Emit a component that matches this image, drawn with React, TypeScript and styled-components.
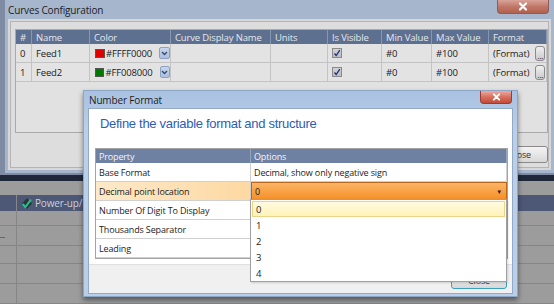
import React from 'react';
import styled, { createGlobalStyle } from 'styled-components';

const GlobalStyle = createGlobalStyle`
  html, body {
    margin: 0;
    padding: 0;
  }
  body {
    width: 554px;
    height: 304px;
    overflow: hidden;
    font-family: "Open Sans", "Liberation Sans", sans-serif;
    font-size: 9px;
    letter-spacing: -0.15px;
    color: #1c1c1c;
  }
`;

const Desktop = styled.div`
  position: relative;
  width: 554px;
  height: 304px;
  overflow: hidden;
  background: #9c9c9c;
`;

/* ---------- application behind the windows ---------- */

const BackApp = styled.div`
  display: flex;
  flex-direction: column;
  height: 100%;
`;

const BehindTop = styled.div`
  height: 177px;
  background: #7e8ba2;
`;

const DarkBand = styled.div`
  height: 6px;
  background: #1f2839;
`;

const BandGap = styled.div`
  height: 15px;
  background: #9c9c9c;
`;

const GridHead = styled.div`
  display: flex;
  height: 16px;
  background: #4c5876;
  color: #c9d0dc;
  font-size: 10px;
`;

const GridRow = styled.div<{ $h: number }>`
  display: flex;
  height: ${(p) => p.$h}px;
  border-bottom: 1px solid #868686;
`;

const GridCell = styled.div<{ $w?: number }>`
  display: flex;
  align-items: center;
  gap: 2px;
  width: ${(p) => (p.$w ? `${p.$w}px` : 'auto')};
  flex: ${(p) => (p.$w ? 'none' : 1)};
  border-right: ${(p) => (p.$w ? '1px solid #868686' : 'none')};
  padding-left: ${(p) => (p.$w ? 0 : 4)}px;
  box-sizing: border-box;
`;

const LinkDash = styled.span`
  display: block;
  width: 5px;
  height: 1px;
  margin-top: 4px;
  background: #5a5ad0;
`;

/* ---------- window chrome ---------- */

const BackWindow = styled.div`
  position: absolute;
  left: 5px;
  top: 0;
  width: 549px;
  height: 173px;
  background: #a6b6cd;
  display: flex;
  flex-direction: column;
  padding: 0 3px 3px;
  box-sizing: border-box;
`;

const TitleBar = styled.div<{ $h: number }>`
  position: relative;
  flex: none;
  height: ${(p) => p.$h}px;
  display: flex;
  align-items: center;
  padding-left: ${(p) => (p.$h > 18 ? 0 : 1)}px;
  font-size: 10px;
  color: #1d1d1d;
`;

const CloseX = styled.div<{ $w: number; $h: number; $dim?: boolean }>`
  position: absolute;
  top: 0;
  right: ${(p) => (p.$dim ? 2 : 1)}px;
  width: ${(p) => p.$w}px;
  height: ${(p) => p.$h}px;
  border: 1px solid ${(p) => (p.$dim ? '#8d5e57' : '#9a3d30')};
  border-top: none;
  border-radius: 0 0 4px 4px;
  box-sizing: border-box;
  background: ${(p) =>
    p.$dim
      ? 'linear-gradient(#d9a39a, #c07868 50%, #b2604f)'
      : 'linear-gradient(#eeaa9e, #d6705f 50%, #c44a36)'};
  display: flex;
  align-items: center;
  justify-content: center;
`;

const BackContent = styled.div`
  flex: 1;
  background: #d7d7d7;
  padding: 2px;
  display: flex;
`;

const Panel = styled.div`
  flex: 1;
  border: 1px solid #b4b4b4;
  background: #dddddd;
  display: flex;
  flex-direction: column;
  padding: 7px 0 0 4px;
`;

const TableBox = styled.div`
  height: 104px;
  border: 1px solid #a9a9a9;
  background: #e1e1e1;
  box-sizing: border-box;
`;

const CurveGrid = styled.div`
  display: grid;
  grid-template-columns: 16px 58px 81px 100px 57px 54px 50px 57px 58px;
  grid-auto-rows: 19px;
  grid-template-rows: 14px;
`;

const HeadCell = styled.div`
  background: #5e7090;
  color: #e2e7ef;
  border-right: 1px solid #8797b2;
  display: flex;
  align-items: center;
  padding-left: 4px;
  font-size: 9.5px;
`;

const Cell = styled.div`
  background: #e3e3e3;
  border-right: 1px solid #c3c3c3;
  border-bottom: 1px solid #c3c3c3;
  display: flex;
  align-items: center;
  gap: 1px;
  padding-left: 4px;
  font-size: 9.5px;
`;

const Swatch = styled.span<{ $c: string }>`
  width: 10px;
  height: 9px;
  border: 1px solid #555;
  box-sizing: border-box;
  background: ${(p) => p.$c};
  margin-left: 1px;
`;

const ComboBtn = styled.span`
  width: 11px;
  height: 12px;
  margin-left: 6px;
  border: 1px solid #8ea1c3;
  border-radius: 2px;
  background: linear-gradient(#c9d6ea, #aebfdc);
  display: flex;
  align-items: center;
  justify-content: center;
  box-sizing: border-box;
`;

const CheckBox = styled.span`
  width: 10px;
  height: 10px;
  border: 1px solid #8a8a8a;
  background: linear-gradient(#d3d3d3, #bdbdbd);
  box-sizing: border-box;
  display: flex;
  align-items: center;
  justify-content: center;
`;

const DotsBtn = styled.span`
  width: 10px;
  height: 15px;
  margin-left: 5px;
  border: 1px solid #8a8a8a;
  border-radius: 3px;
  background: linear-gradient(#f0f0f0, #c9c9c9);
  box-sizing: border-box;
  display: flex;
  align-items: flex-end;
  justify-content: center;
  font-size: 8px;
  line-height: 9px;
`;

const PanelFooter = styled.div`
  flex: 1;
  display: flex;
  justify-content: flex-end;
  align-items: flex-start;
  padding: 13px 0 0;
`;

const Button = styled.div<{ $focus?: boolean }>`
  width: 56px;
  height: 17px;
  border: 1px solid ${(p) => (p.$focus ? '#3d9fc6' : '#8a8a8a')};
  border-radius: 3px;
  background: linear-gradient(#f4f4f4, #d8d8d8);
  box-sizing: border-box;
  display: flex;
  align-items: center;
  justify-content: center;
  font-size: 9px;
  color: #333;
`;

/* ---------- number format dialog ---------- */

const Dialog = styled.div`
  position: absolute;
  left: 83px;
  top: 90px;
  width: 435px;
  height: 207px;
  background: linear-gradient(#a9c2e1, #bad0ea 20%, #b9cfe9);
  border: 1px solid #8ea6c5;
  box-sizing: border-box;
  box-shadow: 0 3px 5px rgba(0, 0, 0, 0.45);
  display: flex;
  flex-direction: column;
  padding: 0 4px 2px;
`;

const Client = styled.div`
  position: relative;
  flex: 1;
  display: flex;
  flex-direction: column;
  border: 1px solid #93a9c6;
`;

const WhiteArea = styled.div`
  background: #ffffff;
  padding: 7px 4px 0 6px;
  height: 155px;
  box-sizing: border-box;
`;

const Heading = styled.div`
  font-family: "Liberation Sans", Arial, sans-serif;
  font-size: 13px;
  letter-spacing: -0.3px;
  line-height: 16px;
  color: #2c5db5;
  padding-left: 5px;
`;

const PropGrid = styled.div`
  margin-top: 16px;
  border: 1px solid #a4a4a4;
  display: grid;
  grid-template-columns: 155px 1fr;
  grid-template-rows: 14px;
  grid-auto-rows: 19px;
`;

const PropHead = styled.div`
  background: #6f81a2;
  color: #f2f4f8;
  display: flex;
  align-items: center;
  padding-left: 3px;
  border-right: 1px solid #95a4bf;
`;

const PropCell = styled.div<{ $sel?: 'name' | 'value' }>`
  display: flex;
  align-items: center;
  padding-left: 3px;
  border-right: 1px solid #d0d0d0;
  border-bottom: 1px solid #d0d0d0;
  background: ${(p) =>
    p.$sel === 'name'
      ? 'linear-gradient(90deg, #fde9c8, #fdd9a3)'
      : p.$sel === 'value'
      ? 'linear-gradient(#fbb566, #f58e24)'
      : '#ffffff'};
  ${(p) => (p.$sel === 'value' ? 'border: 1px solid #b9671c; justify-content: space-between; padding-right: 4px;' : '')}
`;

const Footer = styled.div`
  flex: 1;
  background: #f0f0f0;
  border-top: 1px solid #e0e0e0;
  display: flex;
  justify-content: flex-end;
  align-items: flex-start;
  padding: 7px 5px 0 0;
`;

const DropList = styled.div`
  position: absolute;
  left: 161px;
  top: 90px;
  width: 257px;
  height: 83px;
  background: #ffffff;
  border: 1px solid #a0a0a0;
  box-sizing: border-box;
  box-shadow: 1px 1px 2px rgba(0, 0, 0, 0.15);
  padding: 1px;
`;

const DropItem = styled.div<{ $hot?: boolean }>`
  height: 16px;
  display: flex;
  align-items: center;
  padding-left: 3px;
  box-sizing: border-box;
  font-size: 9.5px;
  border: 1px solid ${(p) => (p.$hot ? '#ecd38a' : 'transparent')};
  background: ${(p) => (p.$hot ? 'linear-gradient(#fffbe0, #fff2b8)' : 'transparent')};
`;

const XMark = ({ size }: { size: number }) => (
  <svg width={size} height={size - 1} viewBox="0 0 10 9">
    <path d="M2 1.5 L8 7.5 M8 1.5 L2 7.5" stroke="#fff" strokeWidth="2.2" strokeLinecap="round" />
  </svg>
);

const Chevron = () => (
  <svg width="7" height="5" viewBox="0 0 7 5">
    <path d="M1 1 L3.5 3.5 L6 1" fill="none" stroke="#2f4d7a" strokeWidth="1.4" />
  </svg>
);

const Tick = () => (
  <svg width="8" height="8" viewBox="0 0 8 8">
    <path d="M1.5 4.5 L3.2 6.5 L6.8 1.2" fill="none" stroke="#1b2b86" strokeWidth="1.3" />
  </svg>
);

const PowerIcon = () => (
  <svg width="12" height="13" viewBox="0 0 12 13">
    <path d="M6 0.5 L11.5 6.5 L6 12.5 L0.5 6.5 Z" fill="#2e3440" stroke="#5f6675" strokeWidth="0.6" />
    <path d="M1.8 6.8 L4.3 10 L10 2.6" fill="none" stroke="#27c08c" strokeWidth="2" />
  </svg>
);

const curves = [
  { id: 0, name: 'Feed1', color: '#e00000', hex: '#FFFF0000' },
  { id: 1, name: 'Feed2', color: '#007a00', hex: '#FF008000' },
];

const heads = ['#', 'Name', 'Color', 'Curve Display Name', 'Units', 'Is Visible', 'Min Value', 'Max Value', 'Format'];

const props = ['Base Format', 'Decimal point location', 'Number Of Digit To Display', 'Thousands Separator', 'Leading'];

export default function App() {
  return (
    <>
      <GlobalStyle />
      <Desktop>
        <BackApp>
          <BehindTop />
          <DarkBand />
          <BandGap />
          <GridHead>
            <GridCell $w={17} />
            <GridCell>
              <PowerIcon />
              Power-up/Initial
            </GridCell>
          </GridHead>
          <GridRow $h={14}>
            <GridCell $w={17} />
            <GridCell />
          </GridRow>
          <GridRow $h={19}>
            <GridCell $w={17}>
              <LinkDash />
            </GridCell>
            <GridCell />
          </GridRow>
          <GridRow $h={18}>
            <GridCell $w={17} />
            <GridCell />
          </GridRow>
          <GridRow $h={19}>
            <GridCell $w={17} />
            <GridCell />
          </GridRow>
          <GridRow $h={19}>
            <GridCell $w={17} />
            <GridCell />
          </GridRow>
        </BackApp>

        <BackWindow>
          <TitleBar $h={19}>
            Curves Configuration
            <CloseX $w={52} $h={14} $dim>
              <XMark size={10} />
            </CloseX>
          </TitleBar>
          <BackContent>
            <Panel>
              <TableBox>
                <CurveGrid>
                  {heads.map((h) => (
                    <HeadCell key={h}>{h}</HeadCell>
                  ))}
                  {curves.map((c) => (
                    <React.Fragment key={c.id}>
                      <Cell>{c.id}</Cell>
                      <Cell>{c.name}</Cell>
                      <Cell>
                        <Swatch $c={c.color} />
                        {c.hex}
                        <ComboBtn>
                          <Chevron />
                        </ComboBtn>
                      </Cell>
                      <Cell />
                      <Cell />
                      <Cell>
                        <CheckBox>
                          <Tick />
                        </CheckBox>
                      </Cell>
                      <Cell>#0</Cell>
                      <Cell>#100</Cell>
                      <Cell>
                        (Format)
                        <DotsBtn>...</DotsBtn>
                      </Cell>
                    </React.Fragment>
                  ))}
                </CurveGrid>
              </TableBox>
              <PanelFooter>
                <Button>Close</Button>
              </PanelFooter>
            </Panel>
          </BackContent>
        </BackWindow>

        <Dialog>
          <TitleBar $h={17}>
            Number Format
            <CloseX $w={32} $h={13}>
              <XMark size={9} />
            </CloseX>
          </TitleBar>
          <Client>
            <WhiteArea>
              <Heading>Define the variable format and structure</Heading>
              <PropGrid>
                <PropHead>Property</PropHead>
                <PropHead>Options</PropHead>
                {props.map((p, i) => (
                  <React.Fragment key={p}>
                    <PropCell $sel={i === 1 ? 'name' : undefined}>{p}</PropCell>
                    {i === 0 && <PropCell>Decimal, show only negative sign</PropCell>}
                    {i === 1 && (
                      <PropCell $sel="value">
                        0<span style={{ fontSize: 6 }}>▼</span>
                      </PropCell>
                    )}
                    {i > 1 && <PropCell />}
                  </React.Fragment>
                ))}
              </PropGrid>
            </WhiteArea>
            <Footer>
              <Button $focus>Close</Button>
            </Footer>
            <DropList>
              {[0, 1, 2, 3, 4].map((n) => (
                <DropItem key={n} $hot={n === 0}>
                  {n}
                </DropItem>
              ))}
            </DropList>
          </Client>
        </Dialog>
      </Desktop>
    </>
  );
}
